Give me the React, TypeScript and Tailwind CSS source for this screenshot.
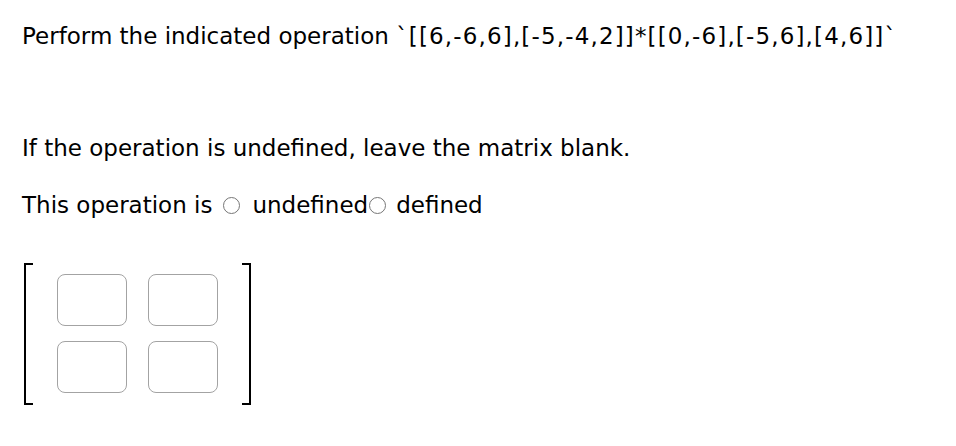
import { useState } from "react"

function Cell() {
  return (
    <input
      type="text"
      className="w-[70px] h-[52px] rounded-[8px] border border-[#a3a3a3] bg-white outline-none"
    />
  )
}

export default function App() {
  const [choice, setChoice] = useState<string | null>(null)

  return (
    <div className="w-[956px] h-[446px] bg-white text-black text-[23px] font-['DejaVu_Sans',sans-serif] pl-[22px] pt-[22px]">
      <p className="leading-[28px]">
        Perform the indicated operation <span className="tracking-[1.15px]">`[[6,-6,6],[-5,-4,2]]*[[0,-6],[-5,6],[4,6]]`</span>
      </p>
      <p className="leading-[28px] mt-[84px]">If the operation is undefined, leave the matrix blank.</p>
      <p className="leading-[28px] mt-[29px] flex items-center">
        This operation is
        <label className="flex items-center">
          <input
            type="radio"
            name="op"
            checked={choice === "undefined"}
            onChange={() => setChoice("undefined")}
            className="ml-[11px] mr-[12px] w-[17px] h-[17px]"
          />
          undefined
        </label>
        <label className="flex items-center">
          <input
            type="radio"
            name="op"
            checked={choice === "defined"}
            onChange={() => setChoice("defined")}
            className="ml-[1px] mr-[10px] w-[17px] h-[17px]"
          />
          defined
        </label>
      </p>
      <div className="mt-[44px] ml-[2px] flex items-stretch w-fit h-[142px]">
        <div className="w-[9px] border-l-2 border-t-2 border-b-2 border-black" />
        <div className="grid grid-cols-2 gap-x-[21px] gap-y-[14px] px-[24px] py-[11px]">
          <Cell />
          <Cell />
          <Cell />
          <Cell />
        </div>
        <div className="w-[9px] border-r-2 border-t-2 border-b-2 border-black" />
      </div>
    </div>
  )
}
